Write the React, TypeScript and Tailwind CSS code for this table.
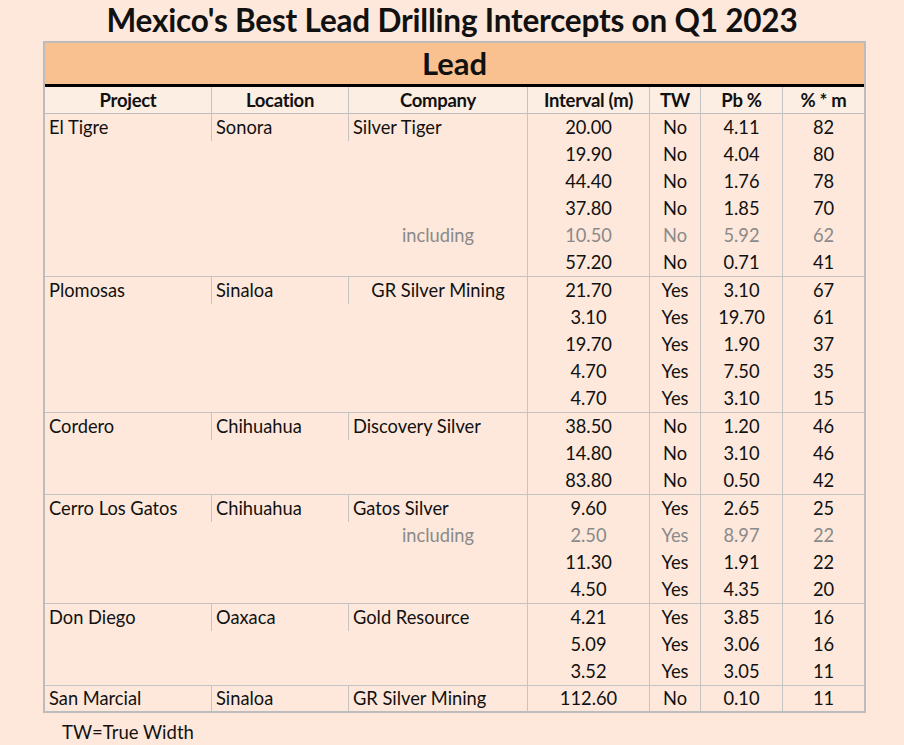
import clsx from "clsx";

type Line = [string, string, string, string];

type Group = {
  project: string;
  location: string;
  company: { text: string; line: number; center?: boolean; muted?: boolean }[];
  rows: Line[];
  muted?: number[];
};

const groups: Group[] = [
  {
    project: "El Tigre",
    location: "Sonora",
    company: [
      { text: "Silver Tiger", line: 0 },
      { text: "including", line: 4, center: true, muted: true },
    ],
    rows: [
      ["20.00", "No", "4.11", "82"],
      ["19.90", "No", "4.04", "80"],
      ["44.40", "No", "1.76", "78"],
      ["37.80", "No", "1.85", "70"],
      ["10.50", "No", "5.92", "62"],
      ["57.20", "No", "0.71", "41"],
    ],
    muted: [4],
  },
  {
    project: "Plomosas",
    location: "Sinaloa",
    company: [{ text: "GR Silver Mining", line: 0, center: true }],
    rows: [
      ["21.70", "Yes", "3.10", "67"],
      ["3.10", "Yes", "19.70", "61"],
      ["19.70", "Yes", "1.90", "37"],
      ["4.70", "Yes", "7.50", "35"],
      ["4.70", "Yes", "3.10", "15"],
    ],
  },
  {
    project: "Cordero",
    location: "Chihuahua",
    company: [{ text: "Discovery Silver", line: 0 }],
    rows: [
      ["38.50", "No", "1.20", "46"],
      ["14.80", "No", "3.10", "46"],
      ["83.80", "No", "0.50", "42"],
    ],
  },
  {
    project: "Cerro Los Gatos",
    location: "Chihuahua",
    company: [
      { text: "Gatos Silver", line: 0 },
      { text: "including", line: 1, center: true, muted: true },
    ],
    rows: [
      ["9.60", "Yes", "2.65", "25"],
      ["2.50", "Yes", "8.97", "22"],
      ["11.30", "Yes", "1.91", "22"],
      ["4.50", "Yes", "4.35", "20"],
    ],
    muted: [1],
  },
  {
    project: "Don Diego",
    location: "Oaxaca",
    company: [{ text: "Gold Resource", line: 0 }],
    rows: [
      ["4.21", "Yes", "3.85", "16"],
      ["5.09", "Yes", "3.06", "16"],
      ["3.52", "Yes", "3.05", "11"],
    ],
  },
  {
    project: "San Marcial",
    location: "Sinaloa",
    company: [{ text: "GR Silver Mining", line: 0 }],
    rows: [["112.60", "No", "0.10", "11"]],
  },
];

const headers = ["Project", "Location", "Company", "Interval (m)", "TW", "Pb %", "% * m"];

const cols = "grid grid-cols-[167px_137px_179px_122px_51px_82px_81px]";

export default function App() {
  return (
    <div
      className="w-[904px] h-[745px] bg-[#fde8db] text-[#111] overflow-hidden"
      style={{ fontFamily: "Lato, 'Open Sans', sans-serif" }}
    >
      <h1 className="h-[41px] flex items-center justify-center text-[31.5px] font-bold tracking-[-0.2px] pt-[1px]">
        Mexico's Best Lead Drilling Intercepts on Q1 2023
      </h1>

      <div className="ml-[43px] w-[823px] border-[2.5px] border-[#bcbcbc]">
        <div className="h-[41px] bg-[#f9c090] flex items-center justify-center text-[31px] font-bold">
          Lead
        </div>
        <div className="h-[3px] bg-black" />

        <div className={clsx(cols, "h-[27px] bg-[#fdeee3] border-b border-[#bdbdbd]")}>
          {headers.map((h, i) => (
            <div
              key={h}
              className={clsx(
                "flex items-center justify-center text-[18.5px] font-bold tracking-[-0.3px]",
                i < headers.length - 1 && "border-r border-[#c4c4c4]"
              )}
            >
              {h}
            </div>
          ))}
        </div>

        {groups.map((g, gi) => {
          const last = gi === groups.length - 1;
          const lh = last ? "h-[25px] leading-[25px]" : "h-[27px] leading-[27px]";
          return (
            <div
              key={g.project}
              className={clsx(cols, "text-[18.3px]", !last && "border-b border-[#c4c4c4]")}
            >
              <div className={clsx("border-r border-[#c4c4c4] pl-[4px] whitespace-nowrap", lh)}>
                {g.project}
              </div>
              <div className={clsx("border-r border-[#c4c4c4] pl-[4px]", lh)}>{g.location}</div>
              <div className="border-r border-[#c4c4c4]">
                {g.rows.map((_, li) => {
                  const c = g.company.find((x) => x.line === li);
                  return (
                    <div
                      key={li}
                      className={clsx(
                        lh,
                        "whitespace-nowrap",
                        c?.center ? "text-center" : "pl-[4px]",
                        c?.muted && "text-[#8a8a8a]"
                      )}
                    >
                      {c?.text ?? ""}
                    </div>
                  );
                })}
              </div>
              {[0, 1, 2, 3].map((ci) => (
                <div key={ci} className={clsx("text-center", ci < 3 && "border-r border-[#c4c4c4]")}>
                  {g.rows.map((r, li) => (
                    <div key={li} className={clsx(lh, g.muted?.includes(li) && "text-[#8a8a8a]")}>
                      {r[ci]}
                    </div>
                  ))}
                </div>
              ))}
            </div>
          );
        })}
      </div>

      <p className="ml-[62px] mt-[6px] text-[18.5px]">TW=True Width</p>
    </div>
  );
}
